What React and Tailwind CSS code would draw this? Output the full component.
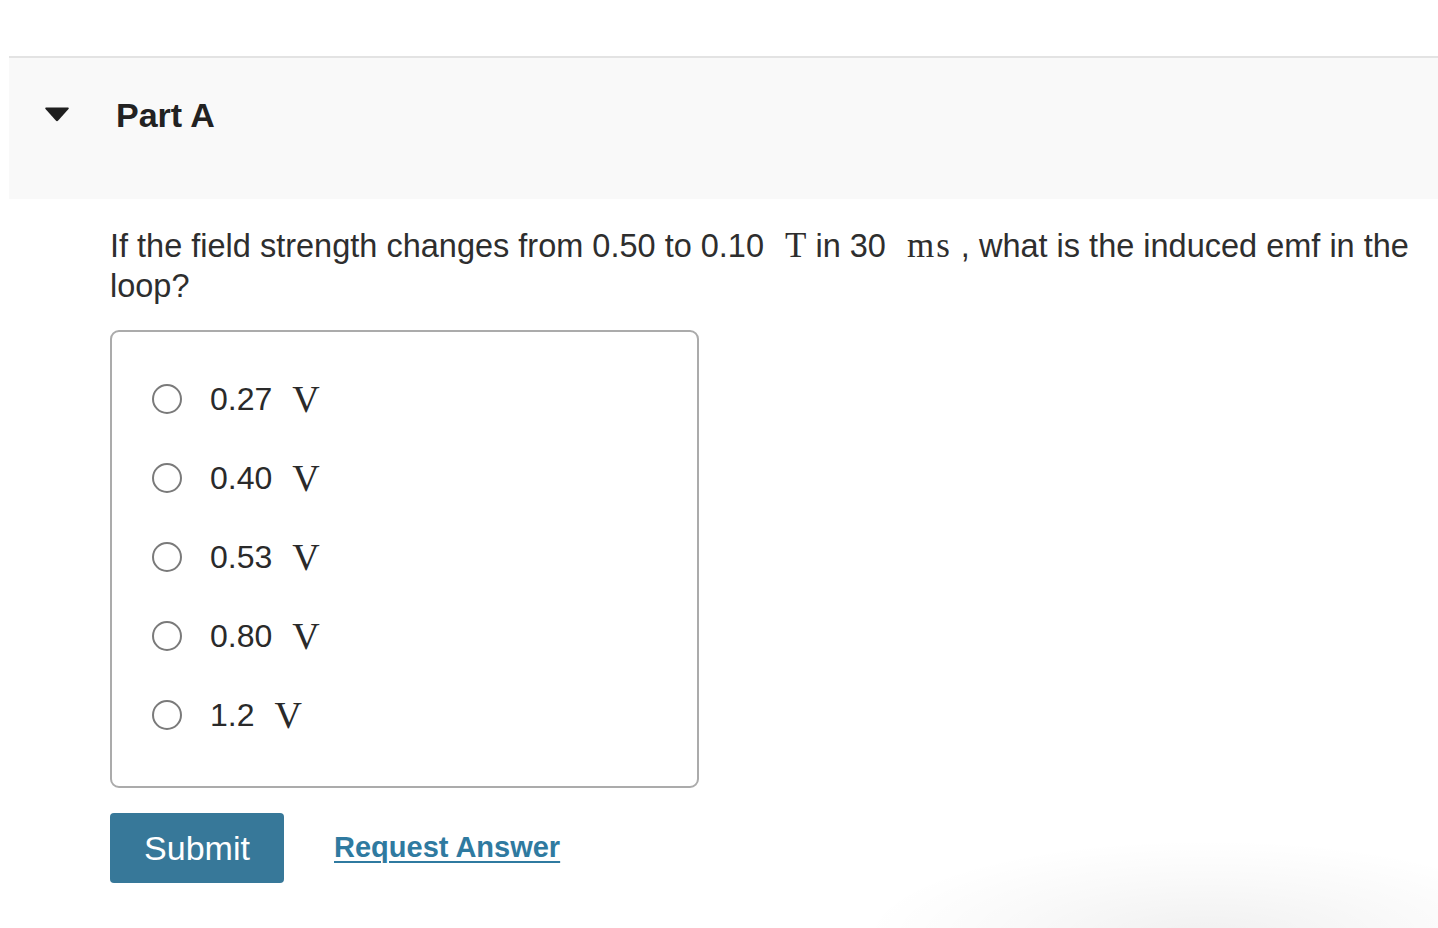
import React from 'react';

const options = ['0.27', '0.40', '0.53', '0.80', '1.2'];

const Unit = ({ children, className = '' }) => (
  <span className={`font-['Liberation_Serif','DejaVu_Serif',serif] ${className}`}>{children}</span>
);

const App = () => {
  return (
    <div className="relative min-h-[928px] overflow-hidden bg-white pl-[9px] pt-[56px] font-['Liberation_Sans',Arial,sans-serif] text-[#2e2e2e]">
      <div className="border-t-2 border-[#e3e3e3] bg-[#f9f9f9] h-[143px] pt-[37px] flex items-start">
        <svg className="ml-[35px] mt-[11px] w-[26px] h-[16px]" viewBox="0 0 26 16">
          <path d="M2 1.5 H24 Q25.5 1.5 24.5 3 L14.2 14.6 Q13 15.8 11.8 14.6 L1.5 3 Q0.5 1.5 2 1.5 Z" fill="#1f1f1f" />
        </svg>
        <h2 className="ml-[46px] text-[34px] leading-[40px] font-bold text-[#222]">Part A</h2>
      </div>

      <div className="pl-[101px] pr-[10px]">
        <p className="mt-[27px] text-[32.5px] leading-[40px]">
          If the field strength changes from 0.50 to 0.10 <Unit className="ml-[12px] text-[35px]">T</Unit> in 30 <Unit className="ml-[12px] text-[35px] tracking-[2px]">ms</Unit> , what is the induced emf in the loop?
        </p>

        <div className="mt-[24px] w-[589px] h-[458px] border-2 border-[#ababab] rounded-[9px] pt-[27px] pl-[40px]">
          {options.map(v => (
            <label key={v} className="h-[79px] flex items-center">
              <span className="w-[30px] h-[30px] rounded-full border-2 border-[#7a7a7a] bg-white" />
              <span className="ml-[28px] text-[32px] leading-[40px] text-[#2a2a2a]">{v}</span>
              <Unit className="ml-[20px] text-[38px] leading-[40px] text-[#2a2a2a]">V</Unit>
            </label>
          ))}
        </div>

        <div className="mt-[25px] flex items-center">
          <button className="w-[174px] h-[70px] rounded-[4px] bg-[#377899] text-white text-[34px]">Submit</button>
          <a href="#" className="ml-[50px] text-[29px] font-bold text-[#2f7aa0] underline underline-offset-[4px] decoration-2">Request Answer</a>
        </div>
      </div>

      <div className="absolute right-[-120px] bottom-[-110px] w-[700px] h-[200px] bg-[radial-gradient(ellipse_at_center,rgba(0,0,0,0.06),rgba(0,0,0,0.025)_40%,transparent_70%)]" />
    </div>
  );
};

export default App;
